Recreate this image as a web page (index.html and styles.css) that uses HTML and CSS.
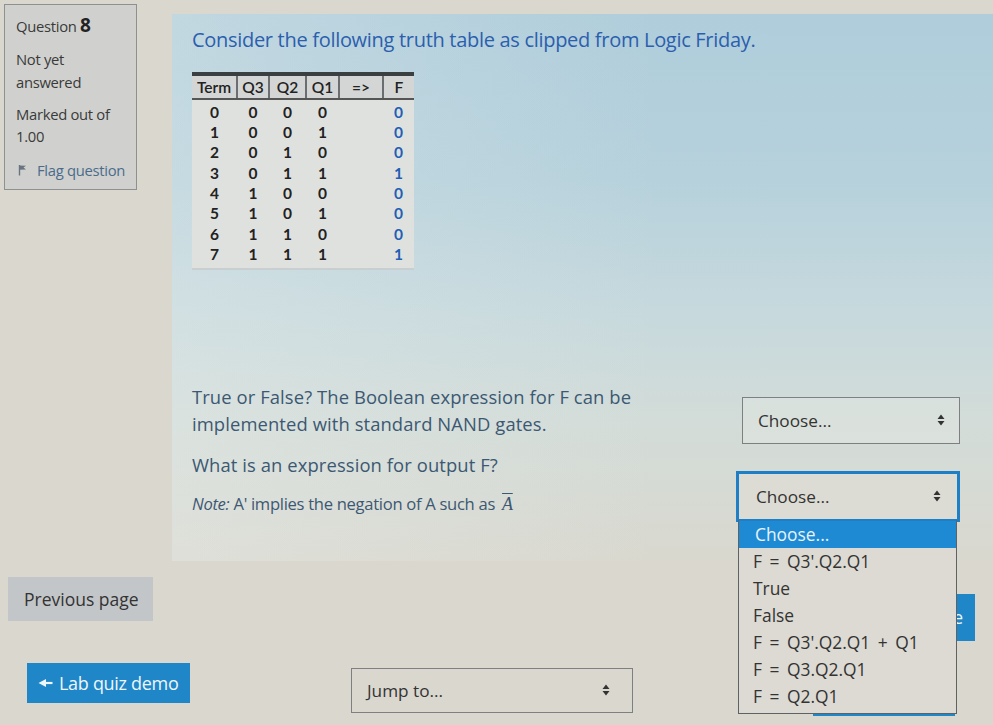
FILE: index.html
```html
<!DOCTYPE html>
<html lang="en">
<head>
<meta charset="utf-8">
<title>Question 8</title>
<link rel="stylesheet" href="styles.css">
</head>
<body>
<div class="page">
  <div class="top">
    <aside class="info">
      <h3 class="qno">Question <span class="num">8</span></h3>
      <div class="state">Not yet<br>answered</div>
      <div class="grade">Marked out of<br>1.00</div>
      <div class="flag">
        <svg class="flag-ico" width="9" height="12" viewBox="0 0 9 12"><path d="M1.5 1 V11.5" stroke="#6a7480" stroke-width="1.4" fill="none"/><path d="M1.5 1.5 L8 1.8 L5.5 3.5 L8 5.5 L1.5 5.8 Z" fill="#6a7480"/></svg>
        <span>Flag question</span>
      </div>
    </aside>
    <main class="content">
      <p class="intro">Consider the following truth table as clipped from Logic Friday.</p>
      <table class="tt">
        <thead>
          <tr><th class="c-term">Term</th><th class="c-q3">Q3</th><th class="c-q2">Q2</th><th class="c-q1">Q1</th><th class="c-arrow">=&gt;</th><th class="c-f">F</th></tr>
        </thead>
        <tbody>
          <tr><td>0</td><td>0</td><td>0</td><td>0</td><td></td><td class="f">0</td></tr>
          <tr><td>1</td><td>0</td><td>0</td><td>1</td><td></td><td class="f">0</td></tr>
          <tr><td>2</td><td>0</td><td>1</td><td>0</td><td></td><td class="f">0</td></tr>
          <tr><td>3</td><td>0</td><td>1</td><td>1</td><td></td><td class="f">1</td></tr>
          <tr><td>4</td><td>1</td><td>0</td><td>0</td><td></td><td class="f">0</td></tr>
          <tr><td>5</td><td>1</td><td>0</td><td>1</td><td></td><td class="f">0</td></tr>
          <tr><td>6</td><td>1</td><td>1</td><td>0</td><td></td><td class="f">0</td></tr>
          <tr><td>7</td><td>1</td><td>1</td><td>1</td><td></td><td class="f">1</td></tr>
        </tbody>
      </table>

      <div class="q-row q-row-1">
        <p class="qtext">True or False? The Boolean expression for F can be<br>implemented with standard NAND gates.</p>
        <div class="select sel-1">
          <span>Choose...</span>
          <svg class="arrows" width="8" height="12" viewBox="0 0 8 12"><path d="M4 0.5 L7.5 5 H0.5 Z M4 11.5 L7.5 7 H0.5 Z" fill="#333"/></svg>
        </div>
      </div>

      <div class="q-row q-row-2">
        <div class="qtext-2">
          <p class="qtext">What is an expression for output F?</p>
          <p class="note"><em>Note:</em> A' implies the negation of A such as <span class="abar">A</span></p>
        </div>
        <div class="select sel-2">
          <span>Choose...</span>
          <svg class="arrows" width="8" height="12" viewBox="0 0 8 12"><path d="M4 0.5 L7.5 5 H0.5 Z M4 11.5 L7.5 7 H0.5 Z" fill="#333"/></svg>
          <ul class="dropdown">
            <li class="active">Choose...</li>
            <li>F = Q3'.Q2.Q1</li>
            <li>True</li>
            <li>False</li>
            <li>F = Q3'.Q2.Q1 + Q1</li>
            <li>F = Q3.Q2.Q1</li>
            <li>F = Q2.Q1</li>
          </ul>
        </div>
      </div>
    </main>
  </div>

  <div class="nav-row">
    <button class="btn btn-secondary">Previous page</button>
    <button class="btn btn-primary btn-next">Next page</button>
  </div>

  <div class="bottom-row">
    <a class="btn btn-primary btn-prev-act"><svg class="back-ico" width="15" height="10" viewBox="0 0 15 10"><path d="M0.5 5 L8 1 V9 Z" fill="#eef6fc"/><path d="M7 5 H14.5" stroke="#eef6fc" stroke-width="2.2"/></svg>Lab quiz demo</a>
    <div class="select jump">
      <span>Jump to...</span>
      <svg class="arrows" width="8" height="12" viewBox="0 0 8 12"><path d="M4 0.5 L7.5 5 H0.5 Z M4 11.5 L7.5 7 H0.5 Z" fill="#333"/></svg>
    </div>
    <span class="btn btn-primary btn-next-act"></span>
  </div>
</div>
</body>
</html>
```

FILE: styles.css
```css
* { box-sizing: border-box; }

html, body {
  margin: 0;
  padding: 0;
}

body {
  width: 993px;
  height: 725px;
  overflow: hidden;
  background: #d9d7ce;
  font-family: "Open Sans", "Noto Sans", sans-serif;
  color: #333;
}

.page {
  width: 993px;
}

.top {
  display: flex;
  align-items: flex-start;
  gap: 35px;
  padding-left: 4px;
}

/* ---------- info box ---------- */
.info {
  margin-top: 4px;
  width: 133px;
  height: 186px;
  flex: none;
  background: #d0d1ce;
  border: 1px solid #8f9090;
  padding: 8px 0 0 11px;
  font-size: 14.8px;
  letter-spacing: -0.3px;
  color: #3a3a3a;
}

.qno {
  margin: 0;
  font-size: 14.8px;
  font-weight: 400;
  line-height: 24px;
}

.qno .num {
  font-size: 19px;
  font-weight: 700;
  color: #222;
}

.state {
  margin-top: 10px;
  line-height: 23px;
}

.grade {
  margin-top: 9px;
  line-height: 22px;
}

.flag {
  margin-top: 13px;
  display: flex;
  align-items: center;
  gap: 10px;
  color: #4a6c8c;
  padding-left: 2px;
}

.flag-ico { flex: none; }

/* ---------- main content ---------- */
.content {
  flex: 1;
  margin-top: 14px;
  padding: 14px 0 39px 20px;
  background:
    linear-gradient(90deg, rgba(235, 240, 238, 0.3) 0%, rgba(235, 240, 238, 0) 60%),
    linear-gradient(180deg, #afcddb 0%, #b6d1dc 30%, #c7d9dd 55%, #d3dcd8 75%, #d9d8cf 100%);
}

.intro {
  margin: 0;
  font-size: 20px;
  line-height: 24px;
  color: #2b5fae;
  letter-spacing: -0.3px;
}

/* ---------- truth table ---------- */
.tt {
  margin-top: 20px;
  border-collapse: collapse;
  font-family: Lato, "Open Sans", sans-serif;
  background: #dfe1df;
  border-top: 4px solid #3a3f42;
  border-bottom: 2px solid #c9cfd0;
}

.tt th {
  height: 25px;
  padding: 0;
  font-size: 15.5px;
  font-weight: 600;
  color: #222;
  background: #d4d6d5;
  border-bottom: 2px solid #555;
  border-left: 2px solid #6a6e70;
  text-align: center;
}

.tt th:first-child { border-left: none; }

.tt td {
  height: 20.3px;
  padding: 0;
  text-align: center;
  font-size: 15.5px;
  font-weight: 700;
  color: #222;
  line-height: 20px;
}

.tt .c-term { width: 45px; }
.tt .c-q3 { width: 32px; }
.tt .c-q2 { width: 37px; }
.tt .c-q1 { width: 33px; }
.tt .c-arrow { width: 44px; }
.tt .c-f { width: 31px; }

.tt tbody tr:first-child td { padding-top: 2px; }
.tt tbody tr:last-child td { padding-bottom: 4px; }

.tt td.f { color: #1f5fb5; }

/* ---------- questions ---------- */
.q-row {
  display: flex;
  align-items: flex-start;
}

.q-row-1 {
  margin-top: 113px;
}

.qtext {
  margin: 0;
  font-size: 18.4px;
  line-height: 27px;
  color: #3c5872;
  letter-spacing: 0.1px;
}

.q-row-1 .qtext {
  width: 550px;
  flex: none;
}

.qtext-2 {
  width: 544px;
  flex: none;
}

.q-row-2 { margin-top: 7px; }

.note {
  margin: 13px 0 0;
  font-size: 16.6px;
  line-height: 26px;
  color: #3c5872;
  letter-spacing: -0.3px;
}

.abar {
  margin-left: 3px;
  font-family: "Liberation Serif", serif;
  font-style: italic;
  font-size: 18px;
  text-decoration: overline;
}

/* ---------- selects ---------- */
.select {
  position: relative;
  display: flex;
  align-items: center;
  justify-content: space-between;
  border: 1px solid #7d7f80;
  background: rgba(232, 234, 228, 0.35);
  font-size: 17.2px;
  color: #333;
}

.sel-1 {
  margin-top: 14px;
  width: 218px;
  height: 47px;
  padding: 0 14px 0 15px;
}

.sel-2 {
  margin-top: 20px;
  width: 224px;
  height: 51px;
  border: 3px solid #1f7fc6;
  padding: 0 16px 0 17px;
  background: #dddcd4;
}

.arrows { flex: none; }

.dropdown {
  position: absolute;
  z-index: 5;
  top: 45px;
  left: -1px;
  width: 219px;
  margin: 0;
  padding: 0 0 3px;
  list-style: none;
  background: #dcdad2;
  border: 1px solid #5f6264;
  border-top: 2px solid #1f7fc6;
}

.dropdown li {
  height: 27px;
  line-height: 27px;
  padding-left: 14px;
  font-size: 17.4px;
  word-spacing: 3px;
  color: #333;
  white-space: nowrap;
}

.dropdown li.active {
  background: #1e8ad3;
  color: #e9f3fb;
  padding-left: 16px;
}

/* ---------- buttons ---------- */
.btn {
  display: inline-flex;
  align-items: center;
  border: none;
  font-family: "Open Sans", "Noto Sans", sans-serif;
  font-size: 17.5px;
  text-decoration: none;
  white-space: nowrap;
}

.btn-secondary {
  background: #c3c6c9;
  color: #333;
}

.btn-primary {
  background: #1f86c8;
  color: #eef6fc;
}

.nav-row {
  display: flex;
  align-items: flex-start;
  justify-content: space-between;
  margin-top: 16px;
  padding: 0 18px 0 8px;
}

.nav-row .btn-secondary {
  width: 145px;
  height: 44px;
  padding: 0 0 0 16px;
}

.btn-next {
  margin-top: 17px;
  height: 47px;
  padding: 0 12px 0 18px;
}

.bottom-row {
  display: flex;
  align-items: flex-start;
  margin-top: 22px;
  padding-left: 27px;
}

.btn-prev-act {
  width: 163px;
  height: 40px;
  padding-left: 11px;
  gap: 6px;
  font-size: 18px;
  letter-spacing: -0.3px;
}

.back-ico { flex: none; }

.jump {
  margin-left: 161px;
  margin-top: 5px;
  width: 282px;
  height: 45px;
  padding: 0 22px 0 15px;
  background: transparent;
}

.btn-next-act {
  margin-left: 180px;
  margin-top: 18px;
  width: 142px;
  height: 35px;
}
```
